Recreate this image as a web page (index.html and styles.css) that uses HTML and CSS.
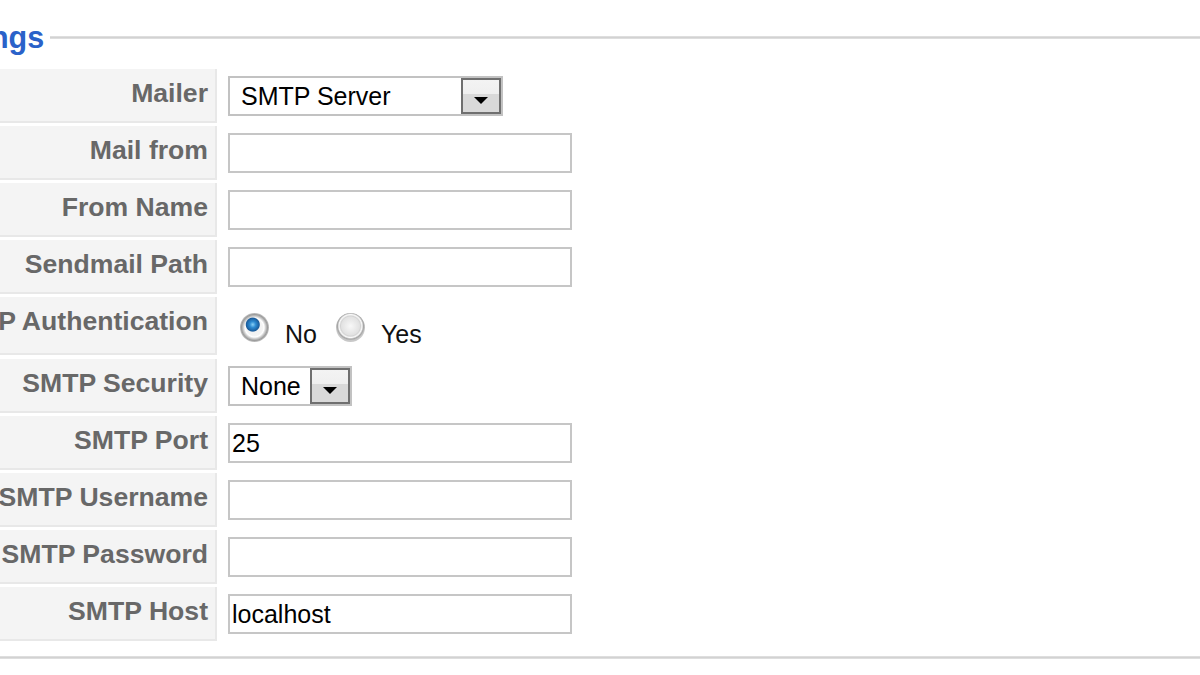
FILE: index.html
```html
<!DOCTYPE html>
<html>
<head>
<meta charset="utf-8">
<title>Mail Settings</title>
<link rel="stylesheet" href="styles.css">
</head>
<body>
<div class="settings">
  <div class="legend-row">
    <span class="legend">Mail Settings</span>
    <span class="legend-line"></span>
  </div>
  <div class="form">
    <div class="key">Mailer</div>
    <div class="val">
      <div class="select select-wide"><span class="select-text">SMTP Server</span><span class="select-btn"><span class="arrow"></span></span></div>
    </div>

    <div class="key">Mail from</div>
    <div class="val"><input class="text-input" type="text" value=""></div>

    <div class="key">From Name</div>
    <div class="val"><input class="text-input" type="text" value=""></div>

    <div class="key">Sendmail Path</div>
    <div class="val"><input class="text-input" type="text" value=""></div>

    <div class="key key-tall">SMTP Authentication</div>
    <div class="val val-radios">
      <span class="radio radio-on"></span><span class="radio-label">No</span>
      <span class="radio radio-off"></span><span class="radio-label">Yes</span>
    </div>

    <div class="key">SMTP Security</div>
    <div class="val">
      <div class="select select-narrow"><span class="select-text">None</span><span class="select-btn"><span class="arrow"></span></span></div>
    </div>

    <div class="key">SMTP Port</div>
    <div class="val"><input class="text-input" type="text" value="25"></div>

    <div class="key">SMTP Username</div>
    <div class="val"><input class="text-input" type="text" value=""></div>

    <div class="key">SMTP Password</div>
    <div class="val"><input class="text-input" type="password" value=""></div>

    <div class="key">SMTP Host</div>
    <div class="val"><input class="text-input" type="text" value="localhost"></div>
  </div>
  <div class="bottom-line"></div>
</div>
</body>
</html>
```
FILE: styles.css
```css
html, body {
  margin: 0;
  padding: 0;
  background: #ffffff;
  overflow: hidden;
}

body {
  font-family: "Liberation Sans", Arial, sans-serif;
}

.settings {
  margin: 0 -60px 0 -160px;
  padding-top: 19px;
}

.legend-row {
  display: flex;
  align-items: center;
  height: 36px;
  padding-left: 16px;
}

.legend {
  font-size: 30.5px;
  font-weight: bold;
  color: #2a62c9;
  line-height: 36px;
  white-space: nowrap;
  margin-right: 6px;
}

.legend-line {
  flex: 1;
  height: 3px;
  background: linear-gradient(#e4e4e4, #d2d2d2 50%, #e4e4e4);
}

.form {
  display: grid;
  grid-template-columns: 377px 1fr;
  column-gap: 11px;
  row-gap: 3px;
  margin-top: 14px;
}

.key {
  box-sizing: border-box;
  height: 54px;
  background: #f4f4f4;
  border-right: 2px solid #e8e8e8;
  border-bottom: 2px solid #e8e8e8;
  padding: 9px 7px 0 0;
  text-align: right;
  font-size: 26.6px;
  font-weight: bold;
  line-height: 31px;
  color: #686868;
  white-space: nowrap;
}

.key-tall {
  height: 58px;
  margin-bottom: 1px;
}

.val {
  padding-top: 7px;
}

.text-input {
  display: block;
  box-sizing: border-box;
  width: 344px;
  height: 40px;
  margin: 0;
  padding: 0 2px;
  border: 2px solid #c6c6c6;
  background: #ffffff;
  font-family: "Liberation Sans", Arial, sans-serif;
  font-size: 25px;
  color: #000000;
  outline: none;
}

.select {
  display: flex;
  box-sizing: border-box;
  height: 40px;
  border: 2px solid #c2c2c2;
  background: #ffffff;
  font-size: 25px;
  color: #000000;
}

.select-wide {
  width: 275px;
}

.select-narrow {
  width: 124px;
}

.select-text {
  flex: 1;
  padding-left: 11px;
  line-height: 36px;
  white-space: nowrap;
}

.select-btn {
  box-sizing: border-box;
  width: 40px;
  border: 2px solid #6f6f6f;
  background: linear-gradient(#f3f3f3 0, #efefef 45%, #d9d9d9 45%, #d9d9d9 100%);
  display: flex;
  align-items: center;
  justify-content: center;
}

.arrow {
  width: 0;
  height: 0;
  border-left: 7px solid transparent;
  border-right: 7px solid transparent;
  border-top: 7px solid #000000;
  margin-top: 9px;
}

.val-radios {
  display: flex;
  align-items: flex-start;
  padding-top: 14px;
  padding-left: 12px;
}

.radio {
  flex: none;
  width: 29px;
  height: 29px;
  border-radius: 50%;
  margin-top: 2px;
}

.radio-on {
  background:
    radial-gradient(circle at 44% 40%, #8ad0f5 0, #2d8bd2 3px, #1a5c9b 6.5px, rgba(26, 92, 155, 0) 7.5px),
    radial-gradient(circle, #eeeeee 0, #f4f4f4 8px, #ffffff 9.5px, #d2d2d2 11px, #9c9c9c 13px, #c4c4c4 14.5px);
}

.radio-off {
  background: radial-gradient(circle at 50% 45%, #f8f8f8 0, #e2e2e2 9px, #d4d4d4 10px, #fbfbfb 11.5px, #a6a6a6 13px, #c8c8c8 14.5px);
}

.radio-label {
  font-size: 25px;
  line-height: 30px;
  padding-top: 8px;
  color: #111111;
  margin-left: 16px;
  margin-right: 19px;
}

.bottom-line {
  margin-top: 15px;
  height: 3px;
  background: linear-gradient(#e4e4e4, #d2d2d2 50%, #e4e4e4);
}
```
